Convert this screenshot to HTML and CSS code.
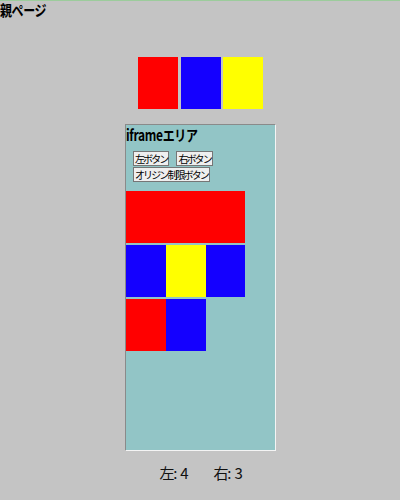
FILE: index.html
```html
<!DOCTYPE html>
<html>
<head>
<meta charset="utf-8">
<link rel="stylesheet" href="styles.css">
</head>
<body>
<h1 class="title"><span class="narrow">親ページ</span></h1>
<div class="top-row">
  <div class="sq red"></div>
  <div class="sq blue"></div>
  <div class="sq yellow"></div>
</div>
<div class="frame">
  <h2 class="frame-title"><span class="narrow">iframeエリア</span></h2>
  <div class="buttons">
    <div class="btn-row">
      <button class="btn">左ボタン</button>
      <button class="btn">右ボタン</button>
    </div>
    <div class="btn-row">
      <button class="btn">オリジン制限ボタン</button>
    </div>
  </div>
  <div class="blocks">
    <div class="blk wide red"></div>
    <div class="blk blue"></div>
    <div class="blk yellow"></div>
    <div class="blk blue"></div>
    <div class="blk red"></div>
    <div class="blk blue"></div>
  </div>
</div>
<div class="counts">
  <span>左: 4</span>
  <span>右: 3</span>
</div>
</body>
</html>
```

FILE: styles.css
```css
html, body {
  margin: 0;
  padding: 0;
}
body {
  background: #c4c4c4;
  border-top: 1px solid #9ccc9c;
  height: 499px;
  font-family: "Noto Sans CJK JP", "DejaVu Sans", sans-serif;
  color: #000;
}
.narrow {
  display: inline-block;
  transform: scaleX(0.8);
  transform-origin: left center;
  white-space: nowrap;
}
.title {
  margin: 0;
  font-size: 15px;
  line-height: 18px;
  font-weight: bold;
  letter-spacing: -0.5px;
}
.top-row {
  display: flex;
  justify-content: center;
  gap: 2px;
  margin-top: 38px;
  padding-left: 1px;
}
.sq {
  width: 40px;
  height: 52px;
}
.top-row .red { margin-right: 1px; }
.red { background: #ff0000; }
.blue { background: #1400ff; }
.yellow { background: #ffff00; }
.frame {
  box-sizing: border-box;
  width: 151px;
  height: 327px;
  margin: 15px auto 0;
  background: #92c5c6;
  border: 1px solid;
  border-color: #8a8a8a #f4f4f4 #f4f4f4 #8a8a8a;
  position: relative;
  left: 0.5px;
}
.frame-title {
  margin: 0;
  font-size: 15px;
  line-height: 20px;
  font-weight: bold;
  letter-spacing: -0.4px;
}
.buttons {
  display: flex;
  flex-direction: column;
  gap: 1px;
  margin-top: 6px;
  padding-left: 7px;
}
.btn-row {
  display: flex;
  gap: 7px;
}
.btn {
  font-family: "Noto Sans CJK JP", sans-serif;
  font-size: 10px;
  line-height: 11px;
  height: 15px;
  padding: 0 1px;
  margin: 0;
  background: #efefef;
  border: 1px solid #767676;
  color: #000;
  letter-spacing: -1.9px;
}
.blocks {
  display: flex;
  flex-wrap: wrap;
  width: 119px;
  row-gap: 2px;
  margin-top: 9px;
}
.blk {
  width: 40px;
  height: 52px;
}
.blk.wide { width: 119px; }
.blk:nth-child(4) { width: 39px; }
.counts {
  display: flex;
  justify-content: center;
  gap: 26px;
  margin-top: 12px;
  font-size: 15px;
  line-height: 20px;
  color: #111;
  letter-spacing: -1.2px;
  word-spacing: 2px;
  padding-left: 1px;
}
```
